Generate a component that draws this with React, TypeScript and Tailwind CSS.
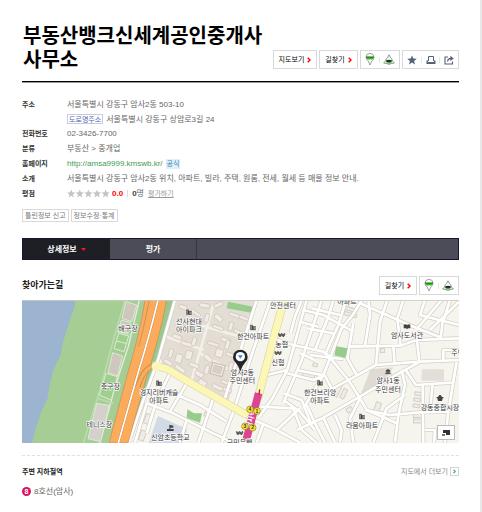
import type { ReactNode } from "react";

const ROADS = [
  "M770 900 L668 1215",
  "M812 900 L760 1050 L700 1235",
  "M920 900 L862 1110 L820 1190 L778 1250",
  "M965 900 L905 1080 L850 1210",
  "M765 1000 L815 1015 L880 1035 L970 1055 L1000 1078",
  "M900 965 L955 980",
  "M872 1000 L885 950 L905 900",
  "M935 925 L1020 945",
  "M1000 900 L985 950 L945 1050",
  "M945 1080 L900 1060 M920 985 L1000 1000",
  "M862 1110 L800 1125 M862 1120 L940 1140 L975 1125",
  "M782 1220 L880 1225 L905 1290 L950 1328",
  "M740 1250 L830 1290 L900 1328",
  "M850 1200 L900 1235 L945 1290",
  "M830 1290 L900 1225 M790 1272 L770 1328",
  "M850 1180 L905 1200 L935 1275",
  "M440 1210 L520 1240 L640 1300 L700 1328",
  "M560 1150 L510 1235 M510 1120 L470 1200 L440 1300",
  "M640 1195 L595 1328 M700 1235 L665 1328",
  "M520 1180 L600 1215 L680 1265",
  "M440 1210 L405 1328",
  "M560 1260 L540 1328",
];

const EAST_ROADS = [
  "M165 0 L128 60 L95 100 L60 190 L40 240 L-20 340",
  "M110 10 L85 90 L45 180",
  "M-20 45 L40 60 L130 110",
  "M0 180 L60 188 L100 192",
  "M150 25 L310 95 L395 128",
  "M130 85 L112 190 L140 240",
  "M115 155 L270 152 L320 135 L447 130",
  "M175 15 L180 60 L165 152",
  "M232 15 L210 80 L198 210",
  "M280 15 L262 70 L272 152",
  "M250 155 L254 205",
  "M318 110 L328 198",
  "M395 15 L318 105",
  "M345 15 L330 60 L398 78 L392 130",
  "M420 15 L400 78 L447 90",
  "M360 105 L447 20",
  "M400 195 L400 165 L447 165",
  "M50 290 L125 250 L198 210 L330 200 L447 195",
  "M-40 405 L40 368 L150 305 L240 250 L330 200",
  "M60 188 L115 255 L150 310 L170 345 L260 385",
  "M-40 225 L45 242 L75 300",
  "M285 222 L318 270 L425 263",
  "M275 225 L285 270 L265 360 L255 443",
  "M440 200 L415 350 L405 443",
  "M368 265 L360 350",
  "M165 345 L240 360 L330 352 L415 350",
  "M338 270 L340 443",
  "M285 300 L230 340 L190 443",
  "M150 310 L120 370 L130 443",
  "M40 368 L75 443",
  "M-10 330 L15 385 L45 443",
  "M345 405 L375 405 L372 443",
  "M75 360 L95 405 L90 443",
];

const BLOCKS: [number, number, number, number, number][] = [
  [540, 912, 24, 12, 20], [575, 925, 34, 10, 35], [600, 908, 30, 12, 10], [640, 915, 28, 12, -25],
  [618, 940, 12, 26, 15], [650, 940, 26, 14, 40], [690, 935, 34, 10, 20], [720, 945, 28, 10, 20],
  [640, 972, 34, 10, 20], [690, 965, 12, 26, 15], [705, 985, 30, 10, 30], [520, 1000, 28, 12, 20],
  [545, 1022, 34, 12, 15], [580, 1010, 12, 26, 15], [510, 1045, 12, 28, 15], [530, 1060, 20, 26, 15],
  [560, 1050, 20, 26, 15], [495, 1075, 28, 12, 30], [530, 1092, 34, 12, 35], [570, 1085, 30, 12, 20],
  [590, 1110, 26, 14, 30], [625, 1022, 34, 10, 18], [665, 1010, 30, 12, 18], [650, 1045, 22, 24, 15],
  [618, 1060, 28, 14, 40], [680, 1055, 28, 10, 20], [690, 1085, 12, 26, 15], [618, 1095, 12, 26, 15],
  [600, 1135, 26, 16, 30], [640, 1150, 34, 12, 25], [672, 1160, 26, 12, 20], [550, 975, 12, 16, 15],
  [665, 1138, 30, 10, 20], [575, 960, 30, 10, 15], [725, 920, 26, 10, 15], [680, 1020, 12, 26, 15],
];

const LOTS: [number, number, number, number, number][] = [
  [910, 1115, 36, 16, 15], [1034, 918, 40, 10, 15], [1034, 934, 38, 10, 15], [1015, 1150, 14, 40, 25],
  [1032, 1165, 12, 30, 25], [940, 1088, 14, 10, 15], [1141, 1046, 12, 12, 0], [1130, 1205, 16, 32, 20],
  [1245, 1175, 20, 10, 8], [1242, 1193, 20, 10, 8], [1240, 1211, 20, 10, 8], [1240, 1241, 24, 12, 0],
  [1240, 1257, 24, 12, 0], [615, 1236, 10, 12, 15], [1037, 1228, 18, 14, -30], [440, 1240, 18, 30, 20],
  [425, 1290, 16, 30, 20],
];

type Place = { x: number; y: number; lines: string[]; icon?: "flats" | "bank" | "office" | "book" | "basket" | "school" };

const PLACES: Place[] = [
  { x: 384, y: 994, lines: ["배구장"] },
  { x: 331, y: 1166, lines: ["축구장"] },
  { x: 298, y: 1280, lines: ["테니스장"] },
  { x: 567, y: 972, lines: ["선사현대", "아이파크"], icon: "flats" },
  { x: 759, y: 1018, lines: ["한건아파트"], icon: "flats" },
  { x: 849, y: 924, lines: ["안전센터"] },
  { x: 1041, y: 911, lines: ["아파트"] },
  { x: 845, y: 1040, lines: ["농협"], icon: "bank" },
  { x: 834, y: 1094, lines: ["신협"], icon: "bank" },
  { x: 727, y: 1125, lines: ["암사2동", "주민센터"] },
  { x: 477, y: 1185, lines: ["경지리버캐슬", "아파트"], icon: "flats" },
  { x: 511, y: 1319, lines: ["신암초등학교"], icon: "school" },
  { x: 719, y: 1334, lines: ["국민은행"], icon: "bank" },
  { x: 1221, y: 1015, lines: ["암사도서관"], icon: "book" },
  { x: 1164, y: 1150, lines: ["암사1동", "주민센터"], icon: "office" },
  { x: 960, y: 1184, lines: ["한건브리앙", "아파트"], icon: "flats" },
  { x: 1086, y: 1285, lines: ["라움아파트"], icon: "flats" },
  { x: 1320, y: 1229, lines: ["강동종합시장"], icon: "basket" },
  { x: 1373, y: 1064, lines: ["주빈"] },
];

function PlaceIcon({ kind }: { kind: NonNullable<Place["icon"]> }) {
  switch (kind) {
    case "flats":
      return <path d="M-9 8 V-9 H0 V-5 H9 V8 Z M-5 -6 V5 M3 -2 V5 M6 -2 V5" fill="#444" stroke="#f5f4ed" strokeWidth="1.5" />;
    case "bank":
      return <path d="M-9 -6 L-5 6 L0 -5 L5 6 L9 -6 M-11 -2 H11 M-10 2 H10" fill="none" stroke="#444" strokeWidth="2.4" />;
    case "office":
      return <path d="M0 -9 L9 -3 H7 V5 H10 V8 H-10 V5 H-7 V-3 H-9 Z M-3 -1 V5 M3 -1 V5" fill="#444" stroke="#f5f4ed" strokeWidth="1.2" />;
    case "book":
      return <path d="M-10 -6 Q-4 -9 0 -5 Q4 -9 10 -6 V5 H3 L0 8 L-3 5 H-10 Z" fill="#444" />;
    case "basket":
      return <path d="M-10 -3 H-6 L-2 -9 H2 L6 -3 H10 V1 H8 L6 9 H-6 L-8 1 H-10 Z" fill="#444" />;
    case "school":
      return <path d="M-10 9 V3 H-3 V-10 L9 -7 V-1 H0 V3 H10 V9 Z" fill="#444" />;
  }
}

function AreaMap() {
  return (
    <svg
      className="block h-full w-full"
      viewBox="66 900 1311 429"
      preserveAspectRatio="xMidYMid slice"
      role="img"
      aria-label="암사2동 지도"
    >
      <rect x="-1000" y="900" width="4000" height="429" fill="#f5f4ed" />
      <path d="M66 900 H522 L474 1078 L384 1329 H66 Z" fill="#a6cd94" />
      <path d="M500 900 H522 L474 1070 L450 1095 Z M440 1105 L462 1100 L388 1329 H376 Z" fill="#98c88f" />
      <path d="M66 900 H228 L222 925 L205 975 L188 1030 L183 1062 L160 1110 L148 1160 L143 1195 L124 1235 L110 1275 L96 1329 H66 Z" fill="#9cb4d0" />

      <g fill="none" stroke="#b9dcab" strokeWidth="5">
        <path d="M375 900 L340 1020 L300 1170 L250 1329" />
        <path d="M418 900 L385 1040 L345 1160 L300 1329" stroke="#e4efdc" strokeWidth="4" />
        <path d="M292 1195 L340 1210 M350 995 L390 1005" />
      </g>
      <g fill="#cfc6bd" stroke="#dcebd2" strokeWidth="3">
        <path d="M378 905 L410 915 L396 965 L366 955 Z" />
        <path d="M364 960 L392 968 L384 1000 L354 994 Z" />
        <path d="M338 1058 L368 1068 L352 1128 L324 1118 Z" />
        <path d="M290 1210 L328 1216 L302 1325 L264 1316 Z" fill="#d6d0cd" />
        <path d="M356 1000 L386 1008 L372 1055 L342 1046 Z M350 1023 L380 1031" fill="#9fcf8f" />
        <path d="M318 1120 L352 1130 L334 1200 L298 1186 Z" fill="#9fcf8f" />
      </g>

      <path d="M530 903 H767 L685 1205 L490 1095 L480 1075 Z" fill="#e4ddd4" />
      <g fill="none" stroke="#f3efe9" strokeWidth="8">
        <path d="M640 915 L575 1140 M600 975 L720 1010 M500 1010 L610 1050 M600 1060 L690 1110" />
      </g>
      <g fill="#f1ece6" stroke="#cbc1b7" strokeWidth="2">
        {BLOCKS.map(([x, y, w, h, r]) => (
          <rect key={`${x}-${y}`} x={x} y={y} width={w} height={h} rx="3" transform={`rotate(${r} ${x} ${y})`} />
        ))}
        <path d="M638 1087 L676 1097 L666 1130 L630 1120 Z" strokeWidth="4" />
        <path d="M643 1095 L668 1102 L661 1122 L638 1115 Z" fill="#d8cfc6" />
      </g>

      <path d="M684 905 L760 920 L754 938 L680 925 Z" fill="#98cc8c" />
      <path d="M562 1228 L582 1240 L606 1240 L600 1268 L560 1254 Z" fill="#98cc8c" />
      <path d="M474 1248 L562 1288 L545 1329 H446 Z" fill="#d2dae8" />
      <path d="M1112 1108 L1180 1102 L1150 1150 L1080 1188 Z" fill="#dfdbd3" />
      <path d="M1266 1108 H1332 V1142 H1264 Z" fill="#e3dfd8" />
      <g fill="#efece5" stroke="#c9c1b6" strokeWidth="2">
        {LOTS.map(([x, y, w, h, r]) => (
          <rect key={`${x}-${y}`} x={x} y={y} width={w} height={h} transform={`rotate(${r} ${x} ${y})`} />
        ))}
      </g>

      {[
        { color: "#d3cec5", width: 12 },
        { color: "#ffffff", width: 8 },
      ].map(({ color, width }) => (
        <g key={color} fill="none" stroke={color} strokeWidth={width} strokeLinejoin="round">
          {ROADS.map((d) => (
            <path key={d} d={d} />
          ))}
          <g transform="translate(930 885)">
            {EAST_ROADS.map((d) => (
              <path key={d} d={d} />
            ))}
          </g>
          <path d="M526 895 L474 1080 L430 1200 L384 1335" />
        </g>
      ))}
      <path d="M1009 1039 L1043 1045 L1036 1074 L1003 1066 Z" fill="#98cc8c" />

      <path d="M435 900 H500 Q480 1010 440 1130 L384 1329 H327 L383 1120 Q420 1000 435 900 Z" fill="#fbab5a" stroke="#c08d5c" strokeWidth="2" />
      <path d="M448 900 Q430 990 416 1040" fill="none" stroke="#b98350" strokeWidth="2" />
      <path d="M474 900 Q445 1020 415 1115 L355 1329" fill="none" stroke="#b98350" strokeWidth="7" />
      <path d="M474 900 Q445 1020 415 1115 L355 1329" fill="none" stroke="#fff" strokeWidth="5" />
      <path d="M414 1160 Q430 1105 462 1097" fill="none" stroke="#b98350" strokeWidth="15" />
      <path d="M412 1164 Q430 1105 462 1097" fill="none" stroke="#fbab5a" strokeWidth="11" />

      <g fill="none" strokeLinecap="round">
        <path d="M466 1098 L500 1106 L560 1142 L735 1242" stroke="#dcd6a8" strokeWidth="24" />
        <path d="M855 890 L830 980 L775 1190" stroke="#dcd6a8" strokeWidth="25" />
        <path d="M466 1098 L500 1106 L560 1142 L735 1242" stroke="#fcf7b6" strokeWidth="20" />
        <path d="M855 890 L830 980 L775 1190" stroke="#fcf7b6" strokeWidth="21" />
      </g>
      <circle cx="470" cy="1099" r="14" fill="#fcf7b6" />
      <path d="M776 1180 L738 1322" stroke="#dd4590" strokeWidth="23" />
      <path d="M779 1168 L777 1184" stroke="#c2185b" strokeWidth="4" />
      <text x="753" y="1264" textAnchor="middle" transform="rotate(-76 753 1257)" fontSize="20" fill="#fff" fontWeight="700">암사역</text>
      {[
        [750, 1228, "4"],
        [771, 1233, "1"],
        [735, 1279, "3"],
        [758, 1283, "2"],
      ].map(([x, y, n]) => (
        <g key={n}>
          <circle cx={x} cy={y} r="10" fill="#f8e83c" stroke="#8d7d1c" strokeWidth="2" />
          <text x={x} y={Number(y) + 5} textAnchor="middle" fontSize="15" fontWeight="700" fill="#333">{n}</text>
        </g>
      ))}

      <g fontSize="21" fill="#333" stroke="#ffffff" strokeWidth="4" strokeLinejoin="round" textAnchor="middle">
        {PLACES.map(({ x, y, lines, icon }) => (
          <g key={`${x}-${y}`}>
            {icon && (
              <g transform={`translate(${x} ${y - 35})`} stroke="none">
                <PlaceIcon kind={icon} />
              </g>
            )}
            {lines.map((line, i) => (
              <text key={line} x={x} y={y + i * 25} paintOrder="stroke">{line}</text>
            ))}
          </g>
        ))}
      </g>

      <path d="M721 1114 Q716 1098 706 1087 A22 22 0 1 1 736 1087 Q726 1098 721 1114 Z" fill="#232529" />
      <circle cx="721" cy="1070" r="14" fill="#fff" />
      <path d="M714 1066 H728 L721 1076 Z" fill="#2b7fff" />
      <path d="M66 901 H1377" stroke="#c9cdc8" strokeWidth="3" />
    </svg>
  );
}

function Chevron({ className }: { className: string }) {
  return (
    <svg className={className} viewBox="0 0 4 6" fill="none" stroke="currentColor" strokeWidth="1.4" aria-hidden="true">
      <path d="M0.7 0.7 L3 3 L0.7 5.3" />
    </svg>
  );
}

function StreetViewIcon() {
  return (
    <svg className="h-[13px] w-[10px]" viewBox="0 0 10 13" aria-hidden="true">
      <path d="M1 4.2 A4 3.8 0 0 1 9 4.2 Q9 6.6 6.8 8 L5 12 L3.2 8 Q1 6.6 1 4.2 Z" fill="#fff" stroke="#888" strokeWidth="0.8" />
      <path d="M1.2 4 H8.8 Q8.6 6 7 6.8 Q5 5.6 3 6.8 Q1.4 6 1.2 4 Z" fill="#2fc01c" />
      <path d="M1 4 H9" stroke="#1d5e14" strokeWidth="1" />
    </svg>
  );
}

function AerialViewIcon() {
  return (
    <svg className="h-[12px] w-[12px]" viewBox="0 0 12 12" aria-hidden="true">
      <path d="M6 0.8 L7.6 3.8 Q9.4 4.8 9.4 7 L11.4 9 L8.8 9.4 Q6 11.4 3.2 9.4 L0.6 9 L2.6 7 Q2.6 4.8 4.4 3.8 Z" fill="#fff" stroke="#777" strokeWidth="0.8" />
      <path d="M2.8 6.6 Q6 5 9.2 6.6 Q9 8.6 6 8.8 Q3 8.6 2.8 6.6 Z" fill="#123d10" />
      <path d="M3.4 8.6 Q6 10 8.6 8.6" fill="none" stroke="#2fae1f" strokeWidth="0.8" />
    </svg>
  );
}

function TextButton({ children, className }: { children: ReactNode; className: string }) {
  return (
    <button type="button" className={`flex h-[19px] items-center justify-center gap-[3px] border border-[#d9d9d9] bg-white text-[7px] text-black ${className}`}>
      {children}
      <Chevron className="h-[6px] w-[4px] text-[#f00]" />
    </button>
  );
}

function Divider() {
  return <span className="h-[6px] w-px bg-[#e6e6e6]" />;
}

function ViewButtons() {
  return (
    <div className="flex h-[19px] w-[40px] items-center justify-between border border-[#d9d9d9] px-1">
      <button type="button" aria-label="거리뷰"><StreetViewIcon /></button>
      <Divider />
      <button type="button" aria-label="항공뷰"><AerialViewIcon /></button>
    </div>
  );
}

function ShareButtons() {
  return (
    <div className="flex h-[19px] w-[57px] items-center justify-between border border-[#d9d9d9] px-1 text-[#566078]">
      <button type="button" aria-label="즐겨찾기">
        <svg className="size-[10px]" viewBox="0 0 10 10" fill="currentColor"><path d="M5 0.4 L6.3 3.6 L9.8 3.8 L7.1 6 L8 9.5 L5 7.6 L2 9.5 L2.9 6 L0.2 3.8 L3.7 3.6 Z" /></svg>
      </button>
      <Divider />
      <button type="button" aria-label="인쇄">
        <svg className="size-[10px]" viewBox="0 0 10 10"><path d="M2.5 6 V1.5 H7.5 V6" fill="#fff" stroke="currentColor" /><path d="M0.5 5.5 H2 V7 H8 V5.5 H9.5 V9 H0.5 Z" fill="currentColor" /></svg>
      </button>
      <Divider />
      <button type="button" aria-label="공유">
        <svg className="size-[10px]" viewBox="0 0 10 10" fill="none" stroke="currentColor" strokeWidth="1.1"><path d="M4 2 H1 V9 H8.5 V6.5 M3.5 6.5 Q3.8 3.6 7 3.4" /><path d="M6.3 0.8 L9.8 3.4 L6.3 6 Z" fill="currentColor" stroke="none" /></svg>
      </button>
    </div>
  );
}

function Row({ label, children }: { label: string; children: ReactNode }) {
  return (
    <div className="flex">
      <dt className="w-[45px] shrink-0 text-[7px] font-bold text-[#333]">{label}</dt>
      <dd className="min-w-0 flex-1">{children}</dd>
    </div>
  );
}

export default function App() {
  return (
    <main
      lang="ko"
      className="min-h-screen border-r-2 border-[#e8e8e8] bg-white pt-6 pr-[21px] pb-2 pl-[22px] font-['Liberation_Sans','Noto_Sans_CJK_KR',sans-serif] text-[8px] leading-[15px] text-[#666]"
    >
      <header className="flex items-end justify-between border-b border-black pb-[9px] shadow-[0_1px_0_#999]">
        <h1 className="min-w-0 flex-1 pl-px text-[20px] leading-6 font-bold break-keep text-black">부동산뱅크신세계공인중개사 사무소</h1>
        <div className="mb-[3px] flex gap-[2px]">
          <TextButton className="w-[44px]">지도보기</TextButton>
          <TextButton className="w-[39px]">길찾기</TextButton>
          <ViewButtons />
          <ShareButtons />
        </div>
      </header>

      <dl className="mt-[15px]">
        <Row label="주소">
          <p>서울특별시 강동구 암사2동 503-10</p>
          <p className="flex h-[14px] items-center gap-[3px]">
            <span className="flex h-[10px] items-center border border-[#c3cbe6] px-px text-[7px] text-[#5568a8]">도로명주소</span>
            서울특별시 강동구 상암로3길 24
          </p>
        </Row>
        <Row label="전화번호">02-3426-7700</Row>
        <Row label="분류">부동산 &gt; 중개업</Row>
        <Row label="홈페이지">
          <span className="flex items-center gap-[3px]">
            <a href="http://amsa9999.kmswb.kr/" className="text-[#3f9a55]">http://amsa9999.kmswb.kr/</a>
            <span className="flex h-[10px] items-center bg-[#def1fb] px-px text-[7px] text-[#4384ab]">공식</span>
          </span>
        </Row>
        <Row label="소개">서울특별시 강동구 암사2동 위치, 아파트, 빌라, 주택, 원룸, 전세, 월세 등 매물 정보 안내.</Row>
        <Row label="평점">
          <span className="flex items-center">
            <svg className="mr-[2px] h-[9px] w-[43px]" viewBox="0 0 43 9" fill="#c4c4c4" role="img" aria-label="별점 0점">
              {[0, 1, 2, 3, 4].map((i) => (
                <path key={i} transform={`translate(${i * 8.6} 0)`} d="M4.2 0.4 L5.3 3.2 L8.3 3.4 L6 5.4 L6.8 8.4 L4.2 6.8 L1.6 8.4 L2.4 5.4 L0.1 3.4 L3.1 3.2 Z" />
              ))}
            </svg>
            <b className="text-[#f00]">0.0</b>
            <span className="mx-1 h-[7px] w-px bg-[#ddd]" />
            <b className="text-[#444]">0</b>명
            <a href="#rate" className="ml-1 text-[7px] text-[#999] underline">평가하기</a>
          </span>
        </Row>
      </dl>

      <div className="mt-2 flex gap-[2px] text-[7px] text-[#777]">
        <button type="button" className="flex h-[13px] items-center border border-[#d9d9d9] px-[2px]">틀린정보 신고</button>
        <button type="button" className="flex h-[13px] items-center border border-[#d9d9d9] px-[2px]">정보수정·통계</button>
      </div>

      <nav className="mt-4 flex h-[22px] border border-[#15182f] bg-[#4b4c58] text-[8px] font-bold text-white">
        <button type="button" className="flex w-[87px] items-center justify-center gap-1 bg-[#1e1f25]">
          상세정보
          <svg className="h-[3px] w-[5px]" viewBox="0 0 5 3" fill="#f01818" aria-hidden="true"><path d="M0 0 H5 L2.5 3 Z" /></svg>
        </button>
        <button type="button" className="w-[87px] border-r border-[#363742]">평가</button>
      </nav>

      <section>
        <div className="mt-4 flex items-center justify-between">
          <h2 className="text-[9px] font-bold text-[#222]">찾아가는길</h2>
          <div className="flex gap-[2px]">
            <TextButton className="w-[38px]">길찾기</TextButton>
            <ViewButtons />
          </div>
        </div>
        <div className="relative mt-[5px] h-[143px] overflow-hidden">
          <AreaMap />
          <button type="button" aria-label="지도 크게 보기" className="absolute right-[4px] bottom-[3px] flex h-[15px] w-[18px] items-center justify-center border border-[#bbb] bg-white">
            <svg className="h-[7px] w-[8px]" viewBox="0 0 8 7" aria-hidden="true"><path d="M1 1 H8 V6 H4 V4 H1 Z" fill="#333" /><path d="M0 5 H3 V7 H0 Z" fill="#777" /></svg>
          </button>
        </div>
      </section>

      <section className="mt-3 border-t border-dashed border-[#e0e0e0] pt-2">
        <div className="flex items-center justify-between text-[7px]">
          <h2 className="font-bold text-[#222]">주변 지하철역</h2>
          <a href="#map" className="flex items-center gap-[2px] text-[#888]">
            지도에서 더보기
            <span className="flex size-[9px] items-center justify-center border border-[#d5d5d5]">
              <Chevron className="h-[5px] w-[3px] text-[#1da04a]" />
            </span>
          </a>
        </div>
        <p className="mt-[5px] flex items-center gap-[3px]">
          <span className="flex size-[9px] items-center justify-center rounded-full bg-[#d6175f] text-[7px] leading-none font-bold text-white">8</span>
          8호선(암사)
        </p>
      </section>
    </main>
  );
}
